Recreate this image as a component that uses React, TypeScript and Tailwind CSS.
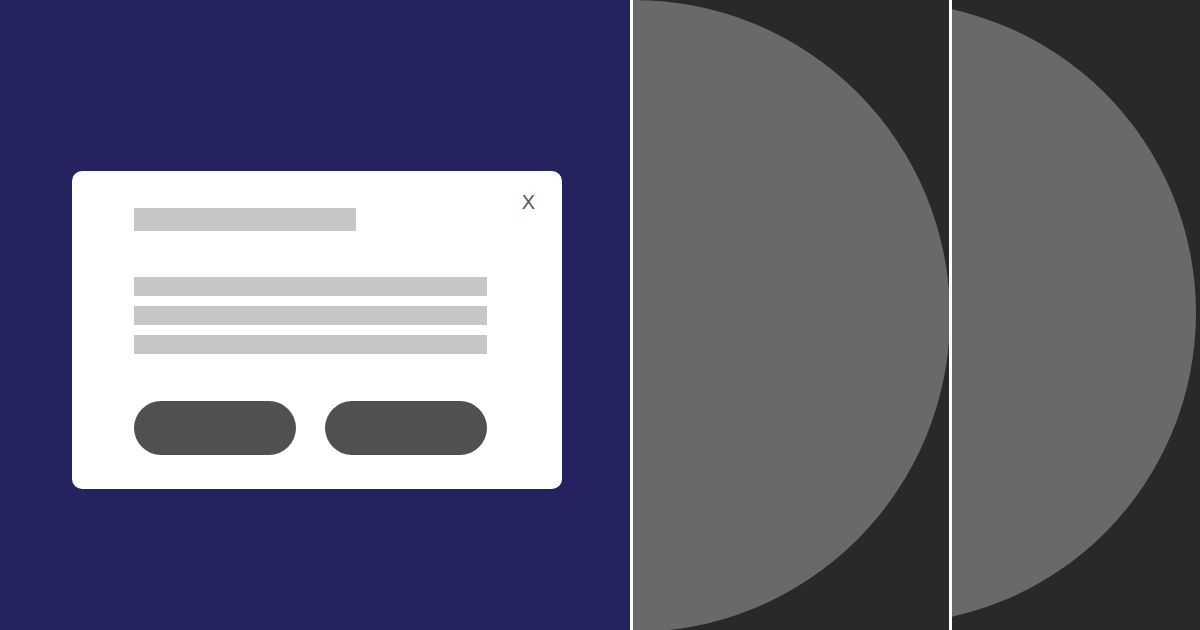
import React from "react";

function HalfDisc({ width, cx, cy, r }: { width: number; cx: number; cy: number; r: number }) {
    return (
        <svg width={width} height={630} viewBox={`0 0 ${width} 630`} className="block">
            <rect width={width} height={630} fill="#292929" />
            <circle cx={cx} cy={cy} r={r} fill="#696969" />
        </svg>
    );
}

function Dialog() {
    return (
        <div className="relative w-[490px] h-[318px] rounded-[10px] bg-white pt-[37px] px-[62px]">
            <span className="absolute right-[27px] top-[21px] text-[20px] leading-none text-[#595959] font-['Liberation_Sans',Arial,sans-serif]">
                X
            </span>
            <div className="w-[222px] h-[23px] bg-[#c6c6c6]" />
            <div className="mt-[46px] w-[353px] flex flex-col gap-[10px]">
                <div className="h-[19px] bg-[#c6c6c6]" />
                <div className="h-[19px] bg-[#c6c6c6]" />
                <div className="h-[19px] bg-[#c6c6c6]" />
            </div>
            <div className="mt-[47px] flex gap-[29px]">
                <div className="w-[162px] h-[54px] rounded-full bg-[#505050]" />
                <div className="w-[162px] h-[54px] rounded-full bg-[#505050]" />
            </div>
        </div>
    );
}

export default function App() {
    return (
        <div className="w-[1200px] h-[630px] flex overflow-hidden bg-white">
            {/* Left panel with modal */}
            <div className="w-[630px] h-full shrink-0 bg-[#25235f] pt-[171px] pl-[72px]">
                <Dialog />
            </div>
            <div className="w-[3px] shrink-0 bg-white" />
            <div className="w-[316px] shrink-0 overflow-hidden">
                <HalfDisc width={316} cx={1} cy={316} r={316} />
            </div>
            <div className="w-[3px] shrink-0 bg-white" />
            <div className="w-[248px] shrink-0 overflow-hidden">
                <HalfDisc width={248} cx={-67} cy={313} r={311} />
            </div>
        </div>
    );
}
